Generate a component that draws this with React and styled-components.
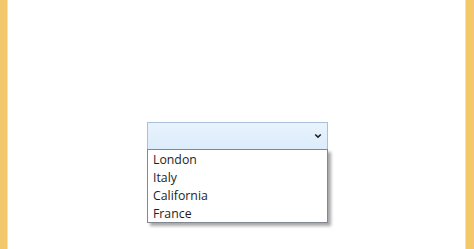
import React from "react";
import styled, { createGlobalStyle } from "styled-components";

const Global = createGlobalStyle`
  html, body { margin: 0; padding: 0; background: #fff; }
  body { font-family: "Open Sans", "Noto Sans", sans-serif; }
`;

const Frame = styled.div`
  box-sizing: border-box;
  width: 474px;
  height: 249px;
  background: #fff;
  border-left: 7px solid #f2c86a;
  border-right: 8px solid #f2c86a;
  box-shadow: inset 1px 0 0 #fbe3a8, inset -1px 0 0 #fbe3a8;
  display: flex;
  flex-direction: column;
  align-items: center;
  padding-top: 122px;
  padding-left: 2px;
`;

const Combo = styled.div`
  position: relative;
  width: 181px;
`;

const Field = styled.div`
  box-sizing: border-box;
  height: 28px;
  border: 1px solid #a9c1d8;
  background: linear-gradient(#e8f3fd, #dcecfb);
  display: flex;
  align-items: center;
  justify-content: flex-end;
  padding-right: 5px;
`;

const Chevron = styled.svg`
  width: 8px;
  height: 6px;
`;

const List = styled.ul`
  position: absolute;
  left: 0;
  top: 27px;
  width: 181px;
  box-sizing: border-box;
  margin: 0;
  padding: 0;
  list-style: none;
  background: #fff;
  border: 1px solid #828790;
  box-shadow: 3px 3px 3px rgba(0, 0, 0, 0.35);
`;

const Item = styled.li`
  height: 18px;
  line-height: 19px;
  padding-left: 5px;
  font-size: 12.3px;
  color: #1e1e1e;
`;

const items = ["London", "Italy", "California", "France"];

export default function App() {
  return (
    <>
      <Global />
      <Frame>
        <Combo>
          <Field>
            <Chevron viewBox="0 0 8 6">
              <path d="M1.2 1.5 L4 4.2 L6.8 1.5" fill="none" stroke="#222" strokeWidth="1.6" />
            </Chevron>
          </Field>
          <List>
            {items.map((t) => (
              <Item key={t}>{t}</Item>
            ))}
          </List>
        </Combo>
      </Frame>
    </>
  );
}
